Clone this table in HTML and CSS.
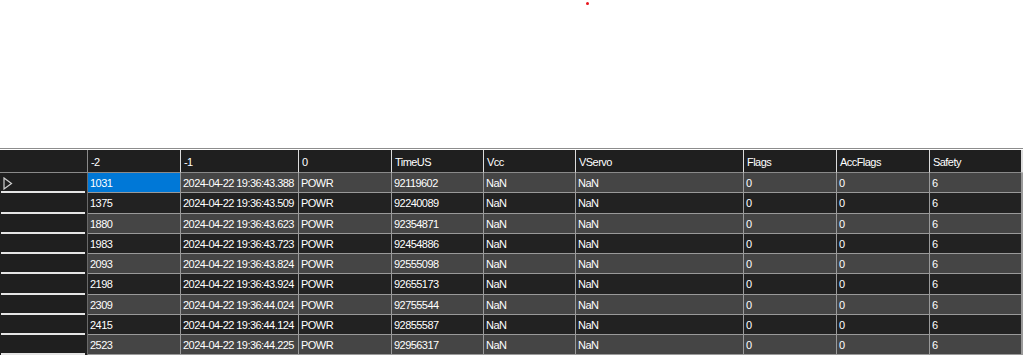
FILE: index.html
```html
<!DOCTYPE html>
<html>
<head>
<meta charset="utf-8">
<link rel="stylesheet" href="styles.css">
</head>
<body>
<div class="top">
  <span class="dot"></span>
</div>
<div class="frame">
<table class="grid">
  <colgroup>
    <col class="c-rh"><col class="c93"><col class="c118"><col class="c93"><col class="c92"><col class="c92"><col class="c168"><col class="c93"><col class="c93"><col class="c92"><col>
  </colgroup>
  <thead>
    <tr>
      <th class="rh"></th><th>-2</th><th>-1</th><th>0</th><th>TimeUS</th><th>Vcc</th><th>VServo</th><th>Flags</th><th>AccFlags</th><th>Safety</th><th></th>
    </tr>
  </thead>
  <tbody>
    <tr class="odd">
      <td class="rh"><svg class="cur" width="10" height="13" viewBox="0 0 10 13"><polygon points="1,1 8.5,6.5 1,12" fill="none" stroke="#d0d0d0" stroke-width="1.2"/></svg></td>
      <td class="sel">1031</td><td>2024-04-22 19:36:43.388</td><td>POWR</td><td>92119602</td><td>NaN</td><td>NaN</td><td>0</td><td>0</td><td>6</td><td></td>
    </tr>
    <tr class="even">
      <td class="rh"></td><td>1375</td><td>2024-04-22 19:36:43.509</td><td>POWR</td><td>92240089</td><td>NaN</td><td>NaN</td><td>0</td><td>0</td><td>6</td><td></td>
    </tr>
    <tr class="odd">
      <td class="rh"></td><td>1880</td><td>2024-04-22 19:36:43.623</td><td>POWR</td><td>92354871</td><td>NaN</td><td>NaN</td><td>0</td><td>0</td><td>6</td><td></td>
    </tr>
    <tr class="even">
      <td class="rh"></td><td>1983</td><td>2024-04-22 19:36:43.723</td><td>POWR</td><td>92454886</td><td>NaN</td><td>NaN</td><td>0</td><td>0</td><td>6</td><td></td>
    </tr>
    <tr class="odd">
      <td class="rh"></td><td>2093</td><td>2024-04-22 19:36:43.824</td><td>POWR</td><td>92555098</td><td>NaN</td><td>NaN</td><td>0</td><td>0</td><td>6</td><td></td>
    </tr>
    <tr class="even">
      <td class="rh"></td><td>2198</td><td>2024-04-22 19:36:43.924</td><td>POWR</td><td>92655173</td><td>NaN</td><td>NaN</td><td>0</td><td>0</td><td>6</td><td></td>
    </tr>
    <tr class="odd">
      <td class="rh"></td><td>2309</td><td>2024-04-22 19:36:44.024</td><td>POWR</td><td>92755544</td><td>NaN</td><td>NaN</td><td>0</td><td>0</td><td>6</td><td></td>
    </tr>
    <tr class="even">
      <td class="rh"></td><td>2415</td><td>2024-04-22 19:36:44.124</td><td>POWR</td><td>92855587</td><td>NaN</td><td>NaN</td><td>0</td><td>0</td><td>6</td><td></td>
    </tr>
    <tr class="odd">
      <td class="rh"></td><td>2523</td><td>2024-04-22 19:36:44.225</td><td>POWR</td><td>92956317</td><td>NaN</td><td>NaN</td><td>0</td><td>0</td><td>6</td><td></td>
    </tr>
  </tbody>
</table>
</div>
</body>
</html>
```

FILE: styles.css
```css
html, body {
  margin: 0;
  padding: 0;
  background: #ffffff;
  width: 1023px;
  height: 355px;
  overflow: hidden;
}

.top {
  height: 148px;
  box-sizing: border-box;
  padding: 2px 0 0 586px;
}

.dot {
  display: block;
  width: 3px;
  height: 3px;
  border-radius: 50%;
  background: #e8141b;
}

.frame {
  border-top: 1px solid #8c8c8c;
  padding-top: 1px;
  background: #ffffff;
}

.grid {
  table-layout: fixed;
  border-collapse: separate;
  border-spacing: 0;
  width: 1023px;
  font-family: "Liberation Sans", Arial, sans-serif;
  font-size: 11px;
  letter-spacing: -0.55px;
  color: #ffffff;
}

.c-rh { width: 88px; }
.c93 { width: 93px; }
.c118 { width: 118px; }
.c92 { width: 92px; }
.c168 { width: 168px; }

.grid th {
  background: #1f1f1f;
  height: 23px;
  padding: 1px 0 0 3px;
  text-align: left;
  font-weight: normal;
  border-right: 1px solid #dcdcdc;
  border-bottom: 1px solid #8a8a8a;
  white-space: nowrap;
  overflow: hidden;
  box-sizing: border-box;
}

.grid th.rh {
  border-right: 1px solid #8a8a8a;
}

.grid td {
  height: 20.25px;
  box-sizing: border-box;
  padding: 1px 0 0 2px;
  border-right: 1px solid #9a9a9a;
  border-bottom: 1px solid #9a9a9a;
  white-space: nowrap;
  overflow: hidden;
  vertical-align: middle;
}

.odd td { background: #454545; }
.even td { background: #222222; }

.grid td.rh {
  background: linear-gradient(#e4e4e4, #e4e4e4) no-repeat 1px 100% / 84px 2px, #1f1f1f;
  border-bottom: none;
  border-right: 1px solid #6a6a6a;
  padding: 0 0 0 3px;
}

.grid td.sel {
  background: #0078d7;
}

.cur {
  display: block;
}
```
